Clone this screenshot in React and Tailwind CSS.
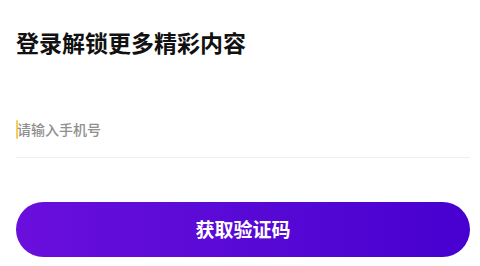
export default function App() {
  return (
    <div
      className="w-[480px] h-[266px] bg-white px-4 overflow-hidden"
      style={{ fontFamily: '"Noto Sans CJK SC", "Noto Sans", sans-serif' }}
    >
      {/* Title */}
      <h1 className="pt-[26px] text-[23px] leading-[32px] font-bold text-[#111]">
        登录解锁更多精彩内容
      </h1>

      {/* Phone input */}
      <div className="mt-[61px] w-[454px] border-b border-[#efefef] pb-[18px] flex items-center">
        <span className="w-[2px] h-[19px] bg-[#f3cf5a] rounded-sm" />
        <span className="text-[14px] leading-[20px] text-[#8f8f8f] font-medium -ml-[1px]">请输入手机号</span>
      </div>

      {/* Button */}
      <button
        type="button"
        className="mt-[44px] w-[454px] h-[55px] rounded-full bg-gradient-to-r from-[#6a0edc] to-[#4700d0] text-white text-[19px] font-bold flex items-center justify-center"
      >
        获取验证码
      </button>
    </div>
  )
}
